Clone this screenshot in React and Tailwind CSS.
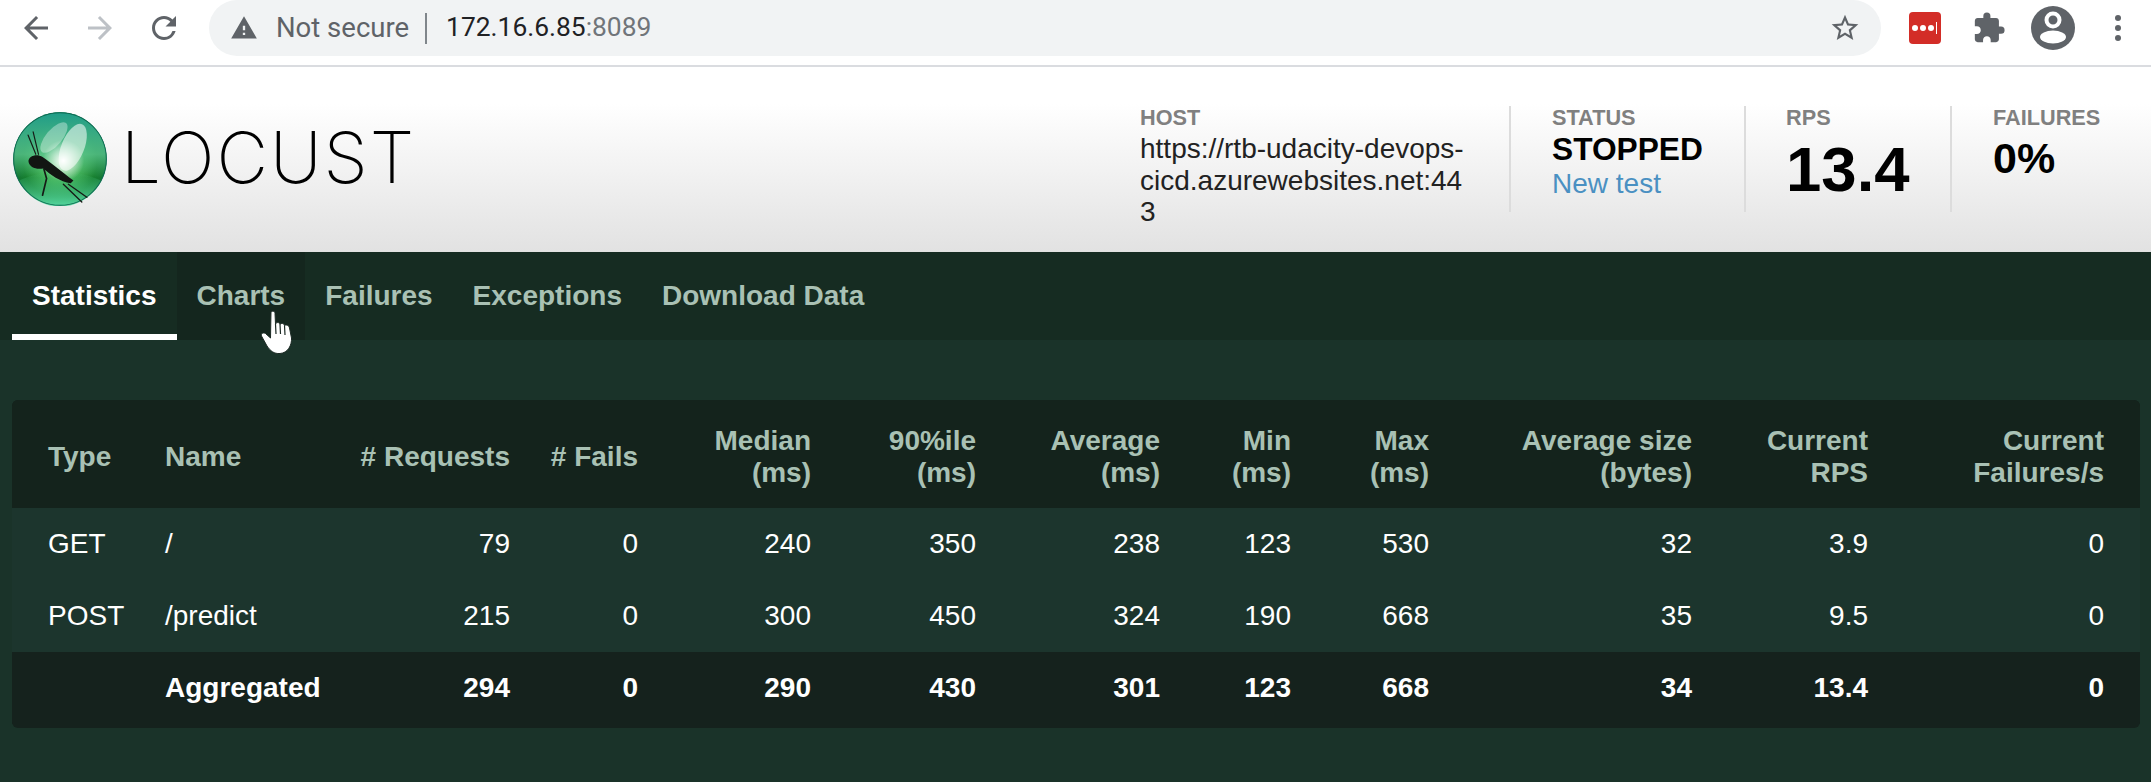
import React from "react";
import { MdArrowBack, MdArrowForward, MdRefresh, MdWarning, MdStarBorder, MdExtension } from "react-icons/md";

const headers = [
  { label: ["Type"], w: "w-[135px]", cls: "pl-9 pr-[18px] text-left" },
  { label: ["Name"], w: "w-[193px]", cls: "px-[18px] text-left" },
  { label: ["# Requests"], w: "w-[188px]" },
  { label: ["# Fails"], w: "w-[128px]" },
  { label: ["Median", "(ms)"], w: "w-[173px]" },
  { label: ["90%ile", "(ms)"], w: "w-[165px]" },
  { label: ["Average", "(ms)"], w: "w-[184px]" },
  { label: ["Min", "(ms)"], w: "w-[131px]" },
  { label: ["Max", "(ms)"], w: "w-[138px]" },
  { label: ["Average size", "(bytes)"], w: "w-[263px]" },
  { label: ["Current", "RPS"], w: "w-[176px]" },
  { label: ["Current", "Failures/s"], w: "w-[254px]", cls: "pl-[18px] pr-9 text-right" },
];

const rows = [
  ["GET", "/", "79", "0", "240", "350", "238", "123", "530", "32", "3.9", "0"],
  ["POST", "/predict", "215", "0", "300", "450", "324", "190", "668", "35", "9.5", "0"],
];
const total = ["", "Aggregated", "294", "0", "290", "430", "301", "123", "668", "34", "13.4", "0"];

const cellCls = (i) =>
  i === 0 ? "pl-9 pr-[18px] text-left" : i === 1 ? "px-[18px] text-left whitespace-nowrap" : i === 11 ? "pl-[18px] pr-9 text-right" : "px-[18px] text-right";

function Logo() {
  return (
    <svg viewBox="0 0 280 280" className="w-[94px] h-[94px] shrink-0 -mt-px" aria-label="Locust logo">
      <defs>
        <radialGradient id="ball" cx="50%" cy="52%" r="62%">
          <stop offset="0%" stopColor="#8fdc8e" />
          <stop offset="38%" stopColor="#3fae52" />
          <stop offset="64%" stopColor="#17802f" />
          <stop offset="100%" stopColor="#0f6a3a" />
        </radialGradient>
        <linearGradient id="top" x1="0" y1="0" x2="0" y2="1">
          <stop offset="0%" stopColor="#1f9c88" />
          <stop offset="45%" stopColor="#5cc792" stopOpacity="0.75" />
          <stop offset="70%" stopColor="#5cc792" stopOpacity="0" />
        </linearGradient>
        <linearGradient id="bottom" x1="0" y1="0" x2="0" y2="1">
          <stop offset="0%" stopColor="#4cc389" stopOpacity="0" />
          <stop offset="100%" stopColor="#55d8a0" />
        </linearGradient>
        <radialGradient id="glow" cx="50%" cy="50%" r="50%">
          <stop offset="0%" stopColor="#ffffff" />
          <stop offset="100%" stopColor="#ffffff" stopOpacity="0" />
        </radialGradient>
      </defs>
      <circle cx="140" cy="140" r="139" fill="url(#ball)" />
      <circle cx="140" cy="140" r="139" fill="url(#top)" />
      <path d="M16 205 Q140 150 264 205 A139 139 0 0 1 16 205Z" fill="url(#bottom)" />
      <circle cx="140" cy="140" r="138" fill="none" stroke="#0d6a52" strokeWidth="3" />
      <circle cx="150" cy="145" r="62" fill="url(#glow)" />
      <ellipse cx="122" cy="76" rx="24" ry="56" transform="rotate(40 122 76)" fill="#ffffff" opacity="0.35" />
      <ellipse cx="178" cy="105" rx="34" ry="74" transform="rotate(22 178 105)" fill="#ffffff" opacity="0.55" />
      <g stroke="#161a16" fill="none" strokeLinecap="round">
        <path d="M45 69 L68 126" strokeWidth="3.5" />
        <path d="M60 59 L76 126" strokeWidth="3.5" />
        <path d="M92 170 L100 198 L88 248" strokeWidth="5" />
        <path d="M150 215 L205 268" strokeWidth="4" />
        <path d="M165 215 L220 254" strokeWidth="4" />
      </g>
      <path d="M46 146 C48 130 72 124 88 134 C110 148 145 178 180 204 L172 212 C140 208 112 186 90 168 C70 172 48 166 46 146Z" fill="#121512" />
    </svg>
  );
}

function Hand() {
  return (
    <svg viewBox="0 0 33 44" className="absolute left-[260px] top-[310px] w-[33px] h-[44px]" aria-hidden="true">
      <path
        d="M11 2 C12.5 0.5 15 1 15 3.5 L15.5 14 C16.5 12 19.5 12 20 14.5 C21 13 24 13 24.5 15.5 C26 14.5 29 15 29.5 18 L31.5 28 C32 35 28 43 20 43.5 C14 44 10.5 41 7 36 L1.5 26 C0.5 23.5 3.5 22 5.5 23.5 L10.5 28 Z"
        fill="#ffffff"
        stroke="#1c2a24"
        strokeWidth="1"
      />
      <path d="M15.5 14 L16 24 M20 14.5 L20.5 24 M24.5 15.5 L25 25" stroke="#1c2a24" strokeWidth="1.2" fill="none" />
    </svg>
  );
}

function Avatar() {
  return (
    <svg viewBox="0 0 44 44" className="w-11 h-11 ml-[25px]" aria-hidden="true">
      <circle cx="22" cy="22" r="22" fill="#5f6368" />
      <circle cx="22" cy="14" r="6.5" fill="none" stroke="#ffffff" strokeWidth="4" />
      <ellipse cx="22" cy="31" rx="13" ry="6.5" fill="#ffffff" />
    </svg>
  );
}

export default function App() {
  return (
    <div className="relative min-h-screen bg-[#1a3329] [font-family:'Liberation_Sans',Arial,sans-serif] overflow-hidden">
      {/* Browser chrome */}
      <div className="h-[67px] bg-white border-b-2 border-[#dadce0] flex items-start">
        <div className="flex items-center h-14 pl-[18px] text-[#5f6368]">
          <MdArrowBack className="w-9 h-9" />
          <MdArrowForward className="w-9 h-9 ml-7 text-[#bdc1c6]" />
          <MdRefresh className="w-9 h-9 ml-7" />
        </div>
        <div className="flex items-center h-14 w-[1672px] ml-[27px] rounded-full bg-[#f1f3f4] pl-[21px] pr-5 [font-family:Roboto,sans-serif] text-[27.5px]">
          <MdWarning className="w-7 h-7 text-[#5f6368]" />
          <span className="ml-[18px] text-[#5f6368]">Not secure</span>
          <span className="ml-[16px] w-0.5 h-[31px] bg-[#80868b]" />
          <span className="ml-[19px] text-[26.4px] text-[#202124]">172.16.6.85<span className="text-[#70757a]">:8089</span></span>
          <MdStarBorder className="w-8 h-8 ml-auto text-[#5f6368]" />
        </div>
        <div className="flex items-center h-14 ml-7">
          <div className="w-8 h-8 rounded-sm bg-[#d32d27] flex items-center pl-[3px] gap-[2px]">
            <span className="w-1.5 h-1.5 rounded-full bg-white" />
            <span className="w-1.5 h-1.5 rounded-full bg-white" />
            <span className="w-1.5 h-1.5 rounded-full bg-white" />
            <span className="w-px h-3 bg-white" />
          </div>
          <MdExtension className="w-[34px] h-[34px] ml-[31px] text-[#5f6368]" />
          <Avatar />
          <div className="flex flex-col gap-1 ml-[40px]">
            <span className="w-1.5 h-1.5 rounded-full bg-[#5f6368]" />
            <span className="w-1.5 h-1.5 rounded-full bg-[#5f6368]" />
            <span className="w-1.5 h-1.5 rounded-full bg-[#5f6368]" />
          </div>
        </div>
      </div>

      {/* Locust header */}
      <header className="h-[185px] bg-gradient-to-b from-white from-20% to-[#e2e2e2] flex items-center pl-[13px]">
        <Logo />
        <span className="ml-[14px] -mt-1 [font-family:Inter,sans-serif] font-extralight text-[71px] leading-none tracking-[2px] text-black">LOCUST</span>
        <div className="ml-auto flex items-stretch self-start mt-[39px]">
          <div className="w-[371px] pr-[30px] border-r-2 border-[#dcdcdc] h-[106px]">
            <div className="text-[21.7px] leading-[26px] font-bold text-[#808080] -mt-px">HOST</div>
            <div className="mt-0.5 text-[28px] leading-[31.5px] text-[#222] [overflow-wrap:anywhere] w-[330px]">https://rtb-udacity-devops-cicd.azurewebsites.net:443</div>
          </div>
          <div className="w-[235px] pl-[41px] border-r-2 border-[#dcdcdc] h-[106px]">
            <div className="text-[21.7px] leading-[26px] font-bold text-[#808080] -mt-px">STATUS</div>
            <div className="text-[31.7px] leading-[36px] font-bold text-black">STOPPED</div>
            <div className="mt-px text-[28px] leading-[32px] text-[#4a90c2]">New test</div>
          </div>
          <div className="w-[206px] pl-[40px] border-r-2 border-[#dcdcdc] h-[106px]">
            <div className="text-[21.7px] leading-[26px] font-bold text-[#808080] -mt-px">RPS</div>
            <div className="mt-[3px] text-[63.5px] leading-[70px] font-bold text-black">13.4</div>
          </div>
          <div className="w-[199px] pl-[41px] h-[106px]">
            <div className="text-[21.7px] leading-[26px] font-bold text-[#808080] -mt-px">FAILURES</div>
            <div className="mt-[5px] text-[43px] leading-[44px] font-bold text-black">0%</div>
          </div>
        </div>
      </header>

      {/* Tabs */}
      <nav className="h-[88px] bg-[#162c22] flex pl-3 text-[28px] font-bold text-[#a9c1b4]">
        <span className="px-5 pt-1.5 h-full flex items-center text-white border-b-[6px] border-white">Statistics</span>
        <span className="px-5 h-full flex items-center bg-[#14261e]">Charts</span>
        <span className="px-5 h-full flex items-center">Failures</span>
        <span className="px-5 h-full flex items-center">Exceptions</span>
        <span className="px-5 h-full flex items-center">Download Data</span>
      </nav>

      {/* Table */}
      <main className="mx-3 mt-[60px] w-[2128px] rounded-md bg-[#15221d] pb-1 overflow-hidden">
        <table className="w-full table-fixed border-collapse text-[28px] leading-8 text-white">
          <thead>
            <tr className="h-[108px] bg-[#14231c] text-[#a9c1b4]">
              {headers.map((h, i) => (
                <th key={i} className={`${h.w} ${h.cls || "px-[18px] text-right"} pt-[5px] font-bold align-middle`}>
                  <span className="block whitespace-nowrap">{h.label[0]}</span>
                  {h.label[1] && <span className="block whitespace-nowrap">{h.label[1]}</span>}
                </th>
              ))}
            </tr>
          </thead>
          <tbody>
            {rows.map((r, ri) => (
              <tr key={ri} className="h-[72px] bg-[#1c352d]">
                {r.map((c, i) => (
                  <td key={i} className={cellCls(i)}>{c}</td>
                ))}
              </tr>
            ))}
            <tr className="h-[72px] bg-[#15221d] font-bold">
              {total.map((c, i) => (
                <td key={i} className={cellCls(i)}>{c}</td>
              ))}
            </tr>
          </tbody>
        </table>
      </main>

      <Hand />
    </div>
  );
}
